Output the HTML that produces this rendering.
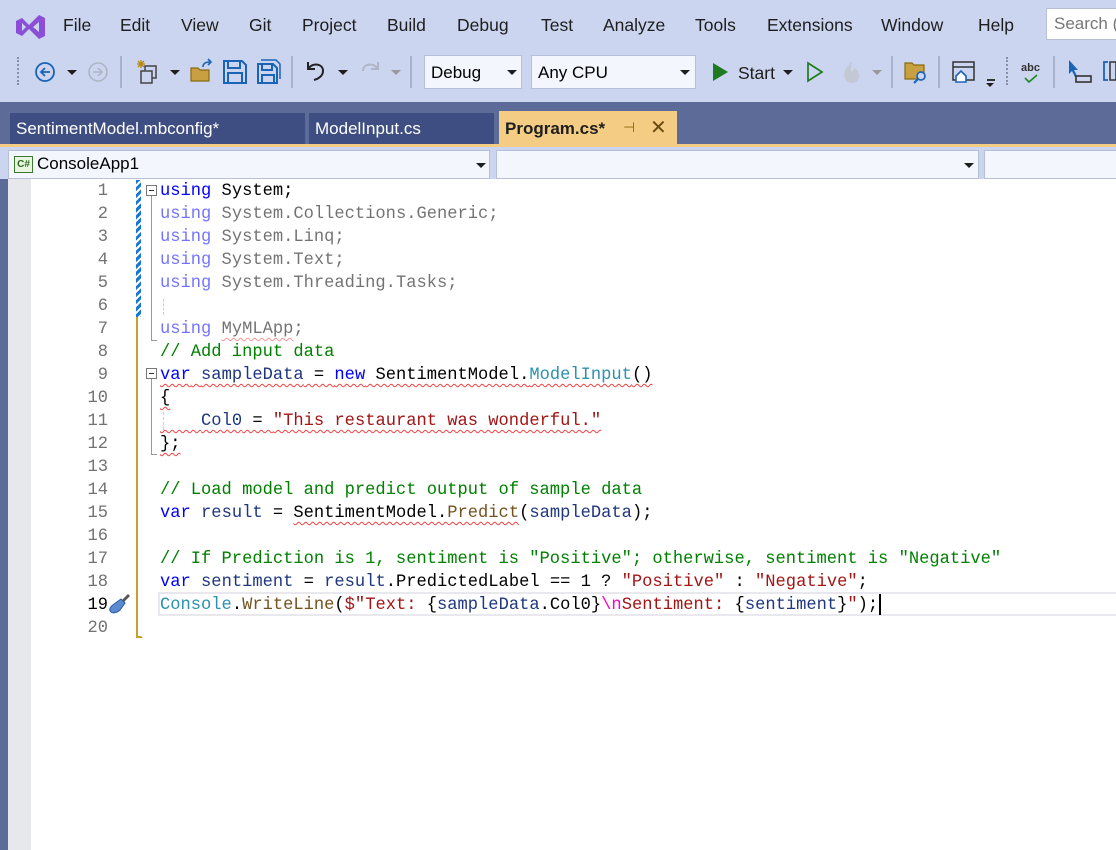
<!DOCTYPE html>
<html><head><meta charset="utf-8"><style>
*{margin:0;padding:0;box-sizing:border-box}
body{width:1116px;height:850px;overflow:hidden;background:#fff;font-family:"Liberation Sans",sans-serif;position:relative}
.a{position:absolute}
.menu{top:0;left:0;width:1116px;height:102px;background:#ccd5f0}
.mi{position:absolute;top:15px;font-size:17.5px;color:#1e1e1e}
.tabs{top:102px;left:0;width:1116px;height:44px;background:#5d6b99}
.tab{position:absolute;top:11px;height:31px;background:#3e4e82;color:#fff;font-size:17px;padding:6px 0 0 6px}
.nav{top:144px;left:0;width:1116px;height:35px;background:#ccd5f0;border-top:3px solid #f5cc84}
.dd{position:absolute;top:3px;height:29px;background:#f4f6fd;border:1px solid #b8c0d8;font-size:17px;padding:3px 0 0 28px}
.tri{position:absolute;width:0;height:0;border-left:5px solid transparent;border-right:5px solid transparent;border-top:5px solid #1e1e1e}
.code{font-family:"Liberation Mono",monospace;font-size:17.1px;white-space:pre;line-height:23px}
.ln{position:absolute;left:60px;width:48px;text-align:right;color:#2b91af;color:#6e7681;color:#727272}
.k{color:#0000ff}.v{color:#1f377f}.t{color:#2b91af}.m{color:#74531f}.s{color:#a31515}.c{color:#008000}.g{opacity:.55}.e{color:#ff00c1}
.sq{text-decoration:underline wavy #f04040;text-decoration-thickness:1px;text-underline-offset:4px}
</style></head><body>
<div class="a menu">
 <svg class="a" style="left:14px;top:12px" width="32" height="30" viewBox="0 0 32 30"><path d="M2 9 L8 6 L15 13 L25 3 L31 6 V24 L25 27 L15 17 L8 24 L2 21 Z M8 11 V19 L12 15 Z M25 10 L19 15 L25 20 Z" fill="#8a4fd6" fill-rule="evenodd"/></svg>
 <span class="mi" style="left:63px">File</span>
 <span class="mi" style="left:120px">Edit</span>
 <span class="mi" style="left:181px">View</span>
 <span class="mi" style="left:249px">Git</span>
 <span class="mi" style="left:302px">Project</span>
 <span class="mi" style="left:387px">Build</span>
 <span class="mi" style="left:457px">Debug</span>
 <span class="mi" style="left:541px">Test</span>
 <span class="mi" style="left:603px">Analyze</span>
 <span class="mi" style="left:695px">Tools</span>
 <span class="mi" style="left:767px">Extensions</span>
 <span class="mi" style="left:881px">Window</span>
 <span class="mi" style="left:978px">Help</span>
 <div class="a" style="left:1046px;top:8px;width:80px;height:32px;background:#fff;border:1px solid #b8c0d8;font-size:17px;color:#777;padding:5px 0 0 7px">Search (</div>
 <!-- toolbar -->
 <div class="a" style="left:17px;top:57px;width:4px;height:28px;border-left:2px dotted #8890a8"></div>
 <svg class="a" style="left:34px;top:60px" width="24" height="24"><circle cx="11" cy="12" r="9" fill="none" stroke="#1a64b8" stroke-width="1.8"/><path d="M16 12H7M11 8L7 12L11 16" fill="none" stroke="#1a64b8" stroke-width="1.8"/></svg>
 <div class="tri" style="left:67px;top:70px"></div>
 <svg class="a" style="left:86px;top:60px" width="24" height="24"><circle cx="12" cy="12" r="9" fill="none" stroke="#b0b5c5" stroke-width="1.6"/><path d="M7 12H16M12 8L16 12L12 16" fill="none" stroke="#b0b5c5" stroke-width="1.6"/></svg>
 <div class="a" style="left:120px;top:56px;width:2px;height:32px;background:#a8b2cc"></div>
 <svg class="a" style="left:136px;top:58px" width="28" height="28"><path d="M5 2V10M1 6H9M2 3L8 9M8 3L2 9" stroke="#b8860b" stroke-width="1.3"/><rect x="9" y="8" width="11" height="12" fill="#ccd5f0" stroke="#444" stroke-width="1.5"/><rect x="5" y="13" width="11" height="12" fill="#ccd5f0" stroke="#444" stroke-width="1.5"/></svg>
 <div class="tri" style="left:170px;top:70px"></div>
 <svg class="a" style="left:189px;top:58px" width="26" height="26"><path d="M2 10H9L11 12H20V23H2Z" fill="#c9a041" stroke="#8a6a10" stroke-width="1.2"/><path d="M14 9C14 5 17 4 21 4M19 1L22 4L19 7" fill="none" stroke="#1a64b8" stroke-width="1.6"/></svg>
 <svg class="a" style="left:222px;top:59px" width="26" height="26"><path d="M2 2H20L24 6V24H2Z" fill="none" stroke="#1a64b8" stroke-width="2"/><path d="M6 2V9H18V2M6 24V14H20V24" fill="none" stroke="#1a64b8" stroke-width="2"/></svg>
 <svg class="a" style="left:256px;top:59px" width="26" height="26"><path d="M5 1H20L24 5V20" fill="none" stroke="#1a64b8" stroke-width="1.5"/><path d="M2 5H17L21 9V24H2Z" fill="none" stroke="#1a64b8" stroke-width="2"/><path d="M6 5V11H16V5M6 24V16H18V24" fill="none" stroke="#1a64b8" stroke-width="2"/></svg>
 <div class="a" style="left:291px;top:56px;width:2px;height:32px;background:#a8b2cc"></div>
 <svg class="a" style="left:303px;top:58px" width="26" height="26"><path d="M5 4V11H12M6 10C9 5 20 5 20 13C20 18 15 21 11 22" fill="none" stroke="#222" stroke-width="2"/></svg>
 <div class="tri" style="left:338px;top:70px"></div>
 <svg class="a" style="left:357px;top:58px" width="26" height="26"><path d="M21 4V11H14M20 10C17 5 6 5 6 13" fill="none" stroke="#b0b5c5" stroke-width="2"/></svg>
 <div class="tri" style="left:391px;top:70px;border-top-color:#999"></div>
 <div class="a" style="left:410px;top:56px;width:2px;height:32px;background:#a8b2cc"></div>
 <div class="dd" style="left:424px;top:55px;width:98px;height:34px;padding:7px 0 0 6px">Debug<div class="tri" style="left:82px;top:14px"></div></div>
 <div class="dd" style="left:531px;top:55px;width:165px;height:34px;padding:7px 0 0 6px">Any CPU<div class="tri" style="left:148px;top:14px"></div></div>
 <svg class="a" style="left:711px;top:62px" width="18" height="20"><path d="M2 1L17 10L2 19Z" fill="#1e7a1e"/></svg>
 <span class="mi" style="left:738px;top:63px">Start</span>
 <div class="tri" style="left:783px;top:70px"></div>
 <svg class="a" style="left:806px;top:61px" width="18" height="22"><path d="M2 2L16 11L2 20Z" fill="none" stroke="#1e7a1e" stroke-width="1.7"/></svg>
 <svg class="a" style="left:840px;top:59px" width="24" height="26"><path d="M12 2C8 8 4 10 4 16C4 21 8 24 12 24C16 24 20 21 19 15C18 12 16 10 14 8C14 12 12 13 11 12C11 9 12 6 12 2Z" fill="#c4c8d4"/></svg>
 <div class="tri" style="left:872px;top:70px;border-top-color:#999"></div>
 <div class="a" style="left:891px;top:56px;width:2px;height:32px;background:#a8b2cc"></div>
 <svg class="a" style="left:903px;top:59px" width="26" height="26"><path d="M2 4H9L11 6H21V20H2Z" fill="#c9a041" stroke="#8a6a10" stroke-width="1.2"/><circle cx="18" cy="17" r="4" fill="#ccd5f0" stroke="#1a64b8" stroke-width="1.7"/><path d="M15 20L11 24" stroke="#1a64b8" stroke-width="2"/></svg>
 <div class="a" style="left:938px;top:56px;width:2px;height:32px;background:#a8b2cc"></div>
 <svg class="a" style="left:951px;top:59px" width="26" height="26"><rect x="2" y="3" width="21" height="18" fill="none" stroke="#333" stroke-width="1.5"/><path d="M2 8H23" stroke="#333" stroke-width="1.5"/><path d="M5 17L10 12L15 17V23H5Z" fill="#fff" stroke="#1a64b8" stroke-width="1.6"/></svg>
 <div class="a" style="left:987px;top:79px;width:8px;height:2px;background:#333"></div>
 <div class="tri" style="left:986px;top:83px;border-width:4px 4px 0 4px"></div>
 <div class="a" style="left:1006px;top:57px;width:4px;height:28px;border-left:2px dotted #8890a8"></div>
 <span class="a" style="left:1021px;top:62px;font-size:11px;font-weight:bold;color:#333">abc</span>
 <svg class="a" style="left:1024px;top:74px" width="16" height="10"><path d="M1 4L5 8L13 1" fill="none" stroke="#1e8a1e" stroke-width="1.6"/></svg>
 <div class="a" style="left:1053px;top:56px;width:2px;height:32px;background:#a8b2cc"></div>
 <svg class="a" style="left:1066px;top:58px" width="28" height="28"><path d="M3 2L3 16L6 13L9 19L11 18L8 12H12Z" fill="#1a64b8"/><rect x="10" y="18" width="15" height="6" fill="none" stroke="#333" stroke-width="1.6"/></svg>
 <svg class="a" style="left:1100px;top:58px" width="16" height="28"><path d="M8 4H4V22H8" fill="none" stroke="#1a64b8" stroke-width="1.8"/><rect x="10" y="4" width="6" height="18" fill="none" stroke="#333" stroke-width="1.5"/></svg>
</div>
<div class="a tabs">
 <div class="tab" style="left:10px;width:295px">SentimentModel.mbconfig*</div>
 <div class="tab" style="left:309px;width:185px">ModelInput.cs</div>
 <div class="tab" style="left:499px;width:178px;top:9px;height:33px;background:#f5cc84;color:#1e1e1e;font-weight:bold;padding-top:8px">Program.cs*
  <span class="a" style="left:124px;top:8px;font-weight:normal;color:#8a6a10;font-size:14px">⊣</span>
  <span class="a" style="left:151px;top:4px;font-weight:normal;font-size:20px;color:#6a4a10">✕</span></div>
</div>
<div class="a nav">
 <div class="dd" style="left:8px;width:482px"><span class="a" style="left:5px;top:5px;width:19px;height:17px;border:1px solid #3a7a2a;background:#e8f5e0;font-size:10px;color:#2a6a1a;font-weight:bold;line-height:15px;text-align:center">C#</span>ConsoleApp1<div class="tri" style="left:467px;top:12px"></div></div>
 <div class="dd" style="left:496px;width:483px"><div class="tri" style="left:467px;top:12px"></div></div>
 <div class="dd" style="left:984px;width:140px"></div>
</div>
<!-- editor -->
<div class="a" style="left:0;top:179px;width:8px;height:671px;background:#5d6b99"></div>
<div class="a" style="left:8px;top:179px;width:23px;height:671px;background:#e7e8ec"></div>
<div class="a" style="left:136px;top:180px;width:5px;height:137px;background:repeating-linear-gradient(135deg,#1a78d4 0 3px,#fff 3px 5px)"></div>
<div class="a" style="left:136px;top:317px;width:7px;height:321px;border:2px solid #c8a030;border-right-color:#fff;border-left:2px solid #c8a030;border-bottom:2px solid #c8a030;border-top:none;background:#fff;width:7px"></div>
<div class="a" style="left:136px;top:317px;width:2px;height:321px;background:#c8a030"></div>
<!-- fold markers -->
<div class="a" style="left:146px;top:185px;width:11px;height:11px;border:1px solid #777;background:#fff"><div class="a" style="left:2px;top:4px;width:5px;height:1px;background:#333"></div></div>
<div class="a" style="left:151px;top:196px;width:1px;height:144px;background:#999"></div>
<div class="a" style="left:151px;top:340px;width:6px;height:1px;background:#999"></div>
<div class="a" style="left:146px;top:368px;width:11px;height:11px;border:1px solid #777;background:#fff"><div class="a" style="left:2px;top:4px;width:5px;height:1px;background:#333"></div></div>
<div class="a" style="left:151px;top:379px;width:1px;height:75px;background:#999"></div>
<div class="a" style="left:151px;top:454px;width:6px;height:1px;background:#999"></div>
<div class="a" style="left:163px;top:299px;width:1px;height:16px;border-left:1px dashed #ccc"></div>
<div class="a" style="left:163px;top:412px;width:1px;height:18px;border-left:1px dashed #ccc"></div>
<!-- current line box -->
<div class="a" style="left:158px;top:592px;width:960px;height:24px;border:2px solid #e8e8ee"></div>
<div class="a" style="left:879px;top:594px;width:2px;height:21px;background:#000"></div>
<svg class="a" style="left:108px;top:593px" width="24" height="24"><path d="M14 7L20 1L22 3L16 9Z" fill="#555"/><path d="M6 11L13 6L17 10L12 17C9 20 4 21 2 18C1 15 3 13 6 11Z" fill="#5a8ad0" stroke="#2a5aa0"/></svg>
<div class="a code" style="left:0;top:180px;width:1116px">
<div class="ln" style="top:0">1
2
3
4
5
6
7
8
9
10
11
12
13
14
15
16
17
18
<span style="color:#000">19</span>
20</div>
<div class="a" style="left:160px;top:0"><span class="k">using</span> System;
<span class="g"><span class="k">using</span> System.Collections.Generic;</span>
<span class="g"><span class="k">using</span> System.Linq;</span>
<span class="g"><span class="k">using</span> System.Text;</span>
<span class="g"><span class="k">using</span> System.Threading.Tasks;</span>

<span class="g"><span class="k">using</span> <span class="sq">MyMLApp</span>;</span>
<span class="c">// Add input data</span>
<span class="sq"><span class="k">var</span> <span class="v">sampleData</span> = <span class="k">new</span> SentimentModel.<span class="t">ModelInput</span>()</span>
<span class="sq">{</span>
<span class="sq">    <span class="v">Col0</span> = <span class="s">"This restaurant was wonderful."</span></span>
<span class="sq">};</span>

<span class="c">// Load model and predict output of sample data</span>
<span class="k">var</span> <span class="v">result</span> = <span class="sq">SentimentModel.<span class="m">Predict</span></span>(<span class="v">sampleData</span>);

<span class="c">// If Prediction is 1, sentiment is "Positive"; otherwise, sentiment is "Negative"</span>
<span class="k">var</span> <span class="v">sentiment</span> = <span class="v">result</span>.PredictedLabel == 1 ? <span class="s">"Positive"</span> : <span class="s">"Negative"</span>;
<span class="t">Console</span>.<span class="m">WriteLine</span>(<span class="s">$"Text: </span>{<span class="v">sampleData</span>.Col0}<span class="e">\n</span><span class="s">Sentiment: </span>{<span class="v">sentiment</span>}<span class="s">"</span>);
</div>
</div>
</body></html>
